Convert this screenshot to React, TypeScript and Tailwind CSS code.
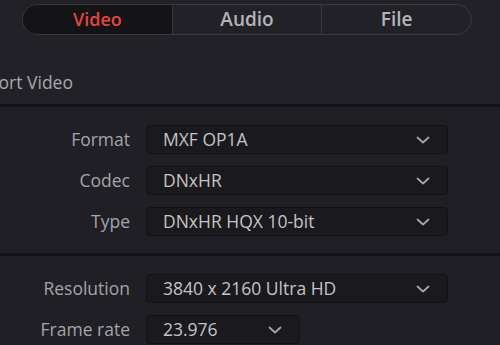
import React from "react";

const Chevron = () => (
  <svg width="14" height="8" viewBox="0 0 14 8" fill="none" className="shrink-0">
    <path d="M1.5 1.5 L7 6.5 L12.5 1.5" stroke="#a6a6aa" strokeWidth="1.8" strokeLinecap="round" strokeLinejoin="round" />
  </svg>
);

const Select = ({ value, w }: { value: string; w: string }) => (
  <div className={`${w} h-[29px] flex items-center justify-between pl-[16px] pr-[17px] rounded-[4px] bg-[#1a191d] border border-[#121114]`}>
    <span className="text-[17.5px] text-[#c4c4c6] leading-none">{value}</span>
    <Chevron />
  </div>
);

const Row = ({ label, value, w = "w-[302px]" }: { label: string; value: string; w?: string }) => (
  <div className="flex items-center gap-[16px]">
    <div className="w-[130px] text-right text-[17.5px] text-[#a4a4a8] leading-none whitespace-nowrap">{label}</div>
    <Select value={value} w={w} />
  </div>
);

export default function App() {
  return (
    <div
      className="w-[500px] h-[345px] overflow-hidden bg-[#222128] flex flex-col"
      style={{ fontFamily: '"Open Sans", "Noto Sans", sans-serif' }}
    >
      <div className="pt-[4px] pl-[22px]">
        <div className="w-[450px] h-[31px] rounded-full border-[1.5px] border-[#3a3940] flex overflow-hidden">
          <div className="flex-1 flex items-center justify-center bg-[#141316] text-[#e4473a] text-[18px] font-semibold">Video</div>
          <div className="flex-1 flex items-center justify-center border-l-[1.5px] border-[#3a3940] text-[#b4b4b8] text-[19px] font-semibold">Audio</div>
          <div className="flex-1 flex items-center justify-center border-l-[1.5px] border-[#3a3940] text-[#b4b4b8] text-[19px] font-semibold">File</div>
        </div>
      </div>
      <div className="h-[69px] flex items-center pt-[26px]">
        <span className="-ml-[31px] text-[17.5px] text-[#a8a8ac] leading-none whitespace-nowrap">Export Video</span>
      </div>
      <div className="h-[3px] bg-[#141317]" />
      <div className="bg-[#201f25] flex flex-col gap-[12px] pt-[18px] pb-[17px]">
        <Row label="Format" value="MXF OP1A" />
        <Row label="Codec" value="DNxHR" />
        <Row label="Type" value="DNxHR HQX 10-bit" />
      </div>
      <div className="h-[3px] bg-[#141317]" />
      <div className="bg-[#201f25] flex flex-col gap-[12px] pt-[18px] flex-1">
        <Row label="Resolution" value="3840 x 2160 Ultra HD" />
        <Row label="Frame rate" value="23.976" w="w-[154px]" />
      </div>
    </div>
  );
}
